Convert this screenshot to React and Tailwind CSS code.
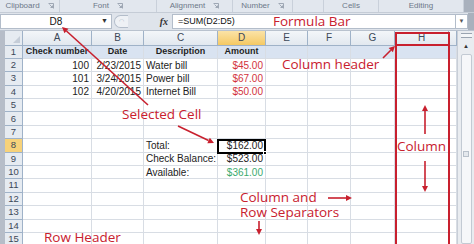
import React from "react";

const COLS = [
  { k: "A", w: "w-[69px]" },
  { k: "B", w: "w-[52px]" },
  { k: "C", w: "w-[74px]" },
  { k: "D", w: "w-[48px]" },
  { k: "E", w: "w-[42px]" },
  { k: "F", w: "w-[43px]" },
  { k: "G", w: "w-[44px]" },
  { k: "H", w: "w-[54px]" },
  { k: "I", w: "w-[8px]" },
];

const DATA = {
  1: { A: "Check number", B: "Date", C: "Description", D: "Amount", head: true },
  2: { A: "100", B: "2/23/2015", C: "Water bill", D: "$45.00", dc: "text-[#d2323c]" },
  3: { A: "101", B: "3/24/2015", C: "Power bill", D: "$67.00", dc: "text-[#d2323c]" },
  4: { A: "102", B: "4/20/2015", C: "Internet Bill", D: "$50.00", dc: "text-[#d2323c]" },
  8: { C: "Total:", D: "$162.00" },
  9: { C: "Check Balance:", D: "$523.00" },
  10: { C: "Available:", D: "$361.00", dc: "text-[#3aaa6e]" },
};

const GROUPS = [
  { name: "Clipboard", w: "w-[60px]", launcher: true },
  { name: "Font", w: "w-[97px]", launcher: true },
  { name: "Alignment", w: "w-[76px]", launcher: true },
  { name: "Number", w: "w-[60px]", launcher: true },
  { name: "", w: "w-[31px]" },
  { name: "Cells", w: "w-[55px]" },
  { name: "Editing", w: "w-[85px]" },
];

const Launcher = () => (
  <svg width="6" height="6" viewBox="0 0 6 6" className="shrink-0">
    <path d="M0.5 0.5h5v5" fill="none" stroke="#8d97a5" strokeWidth="0.8" />
    <path d="M1.5 1.5l3 3M2.5 4.5h2v-2" fill="none" stroke="#8d97a5" strokeWidth="0.8" />
  </svg>
);

const Row = ({ n }) => {
  const d = DATA[n] || {};
  const rowBg = d.head ? "bg-[#d9e3f1]" : "bg-white";
  return (
    <div className="flex h-[13.4px]">
      <div className="w-[5px] bg-[#b6bdc8]" />
      <div
        className={`w-[18px] flex items-center justify-center border-r border-b border-[#9fb2c8] text-[9.5px] text-[#3c4858] ${
          n === 8 ? "bg-[#f7d27a]" : "bg-[#e6ebf1]"
        }`}
      >
        {n}
      </div>
      {COLS.map((c) => {
        const v = d[c.k];
        let align = "justify-end";
        if (c.k === "C") align = "justify-start";
        if (d.head) align = "justify-center";
        let color = "text-[#222]";
        if (d.head) color = "text-[#1f1f1f]";
        else if (c.k === "D" && d.dc) color = d.dc;
        return (
          <div
            key={c.k}
            className={`${c.w} ${rowBg} ${color} flex items-center ${align} px-[2px] border-r border-b border-[#d8dde4] overflow-visible whitespace-nowrap ${
              d.head ? "font-bold text-[9px]" : "text-[10px]"
            }`}
          >
            {v}
          </div>
        );
      })}
    </div>
  );
};

const Arrow = ({ x1, y1, x2, y2 }) => {
  const a = Math.atan2(y2 - y1, x2 - x1);
  const L = 6;
  const W = 3;
  const bx = x2 - L * Math.cos(a);
  const by = y2 - L * Math.sin(a);
  const px = -Math.sin(a) * W;
  const py = Math.cos(a) * W;
  return (
    <g>
      <line x1={x1} y1={y1} x2={bx} y2={by} stroke="#c8202e" strokeWidth="1.6" />
      <polygon
        points={`${x2},${y2} ${bx + px},${by + py} ${bx - px},${by - py}`}
        fill="#c8202e"
      />
    </g>
  );
};

export default function App() {
  const rows = Array.from({ length: 15 }, (_, i) => i + 1);
  return (
    <div
      className="relative w-[474px] h-[244px] overflow-hidden bg-white"
      style={{ fontFamily: '"Liberation Sans", Arial, sans-serif' }}
    >
      {/* ribbon group labels */}
      <div className="flex h-[13px] bg-[#e2e7ee] border-b border-[#c5ccd6]">
        {GROUPS.map((g, i) => (
          <div
            key={i}
            className={`${g.w} flex items-center justify-center gap-[8px] border-r border-[#c9d0da] text-[8px] text-[#6d7889]`}
          >
            <span>{g.name}</span>
            {g.launcher && <Launcher />}
          </div>
        ))}
        <div className="flex-1 bg-[#a9b1bd]" />
      </div>

      {/* formula bar */}
      <div className="flex items-center h-[18px] bg-[#dfe4eb] border-b border-[#b9c2ce]">
        <div className="relative w-[112px] h-[15px] bg-white border border-[#b3bdca] flex items-center justify-center text-[10px] text-[#111]">
          D8
          <span className="absolute right-[3px] top-[1px] text-[7px] text-[#333]">▼</span>
        </div>
        <div className="ml-[2px] w-[58px] h-[15px] flex items-center">
          <div className="w-[14px] h-[13px] rounded-l-full border border-r-0 border-[#b3bdca] bg-[#eef1f5] flex items-center justify-center text-[6px] text-[#aab2bd]">
            ◠
          </div>
          <span className="ml-auto mr-[4px] italic text-[10px] font-bold text-[#333]" style={{ fontFamily: '"Liberation Serif", serif' }}>
            fx
          </span>
        </div>
        <div className="flex-1 h-[15px] bg-white border border-[#b3bdca] flex items-center pl-[5px] text-[9px] text-[#111]">
          =SUM(D2:D5)
        </div>
        <div className="w-[12px] h-[15px] bg-white border border-l-0 border-[#b3bdca] flex items-center justify-center text-[6px] text-[#555]">
          ▼
        </div>
        <div className="w-[6px] h-full bg-[#a9b1bd]" />
      </div>

      {/* sheet */}
      <div className="flex">
        <div className="flex flex-col">
          <div className="flex h-[14.5px]">
            <div className="w-[5px] bg-[#b6bdc8]" />
            <div className="w-[18px] bg-[#e6ebf1] border-r border-b border-[#9fb2c8] flex items-end justify-end p-[2px]">
              <svg width="7" height="7" viewBox="0 0 7 7">
                <polygon points="7,0 7,7 0,7" fill="#c5cdd8" />
              </svg>
            </div>
            {COLS.map((c) => (
              <div
                key={c.k}
                className={`${c.w} flex items-center justify-center border-r border-b border-[#9fb2c8] text-[10px] text-[#3c4858] ${
                  c.k === "D"
                    ? "bg-gradient-to-b from-[#fbe3a6] to-[#f5c962]"
                    : "bg-gradient-to-b from-[#f3f6f9] to-[#e2e8ef]"
                }`}
              >
                {c.k !== "I" && c.k}
              </div>
            ))}
          </div>
          {rows.map((n) => (
            <Row key={n} n={n} />
          ))}
        </div>

        {/* vertical scrollbar */}
        <div className="w-[17px] h-[213px] bg-[#e9ecf0] border-l border-[#c8ced7] flex flex-col items-center">
          <div className="mt-[2px] w-[11px] h-[5px] border-y border-[#9aa4b1] bg-[#f4f6f8]" />
          <div className="mt-[3px] w-[11px] h-[10px] flex items-center justify-center text-[6px] text-[#333]">▲</div>
          <div className="mt-[3px] w-[11px] flex-1 bg-[#f6f7f9] border border-[#c3cad3] rounded-[2px] flex flex-col items-center pt-[96px]">
            <div className="w-[6px] h-[6px] border border-[#b8c0ca] bg-[#e4e8ed]" />
          </div>
        </div>
      </div>

      {/* selected cell D8 */}
      <div className="absolute left-[217px] top-[139px] w-[49px] h-[15px] border-2 border-black pointer-events-none" />
      <div className="absolute left-[263px] top-[151px] w-[4px] h-[4px] bg-black border border-white" />

      {/* column H highlight */}
      <div className="absolute left-[395px] top-[32px] w-[55px] h-[230px] border-2 border-[#c8202e] pointer-events-none" />
      <div className="absolute left-[395px] top-[44px] w-[55px] h-[2px] bg-[#c8202e]" />

      {/* annotations */}
      <div
        className="absolute inset-0 pointer-events-none text-[#c8202e] text-[13.5px] leading-none"
        style={{ fontFamily: '"Open Sans", sans-serif' }}
      >
        <span className="absolute left-[273px] top-[14.5px]">Formula Bar</span>
        <span className="absolute left-[282px] top-[58px]">Column header</span>
        <span className="absolute left-[122px] top-[107.5px]">Selected Cell</span>
        <span className="absolute left-[397px] top-[140px]">Column</span>
        <span className="absolute left-[240px] top-[191px]">Column and</span>
        <span className="absolute left-[240px] top-[206px]">Row Separators</span>
        <span className="absolute left-[44px] top-[231px]">Row Header</span>
      </div>

      <svg className="absolute inset-0 pointer-events-none" width="474" height="244">
        <Arrow x1={148} y1={105} x2={62} y2={27} />
        <Arrow x1={178} y1={126} x2={214} y2={143} />
        <Arrow x1={383} y1={58} x2={395} y2={46} />
        <Arrow x1={425} y1={134} x2={425} y2={105} />
        <Arrow x1={425} y1={161} x2={425} y2={192} />
        <Arrow x1={328} y1={198} x2={352} y2={198} />
        <Arrow x1={259} y1={221} x2={259} y2={235} />
      </svg>
    </div>
  );
}
